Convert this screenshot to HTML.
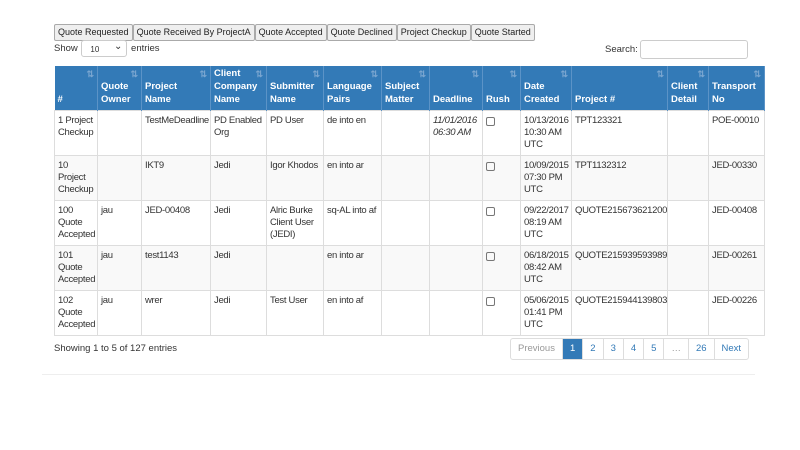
<!DOCTYPE html>
<html><head><style>
body{margin:0;background:#fff;font-family:"Liberation Sans",sans-serif;font-size:9.5px;color:#333;width:800px;height:450px;overflow:hidden;position:relative}
.btns{position:absolute;left:54px;top:24px;display:flex}
.btns span{border:1px solid #aaa;background:#efefef;padding:0 3px;height:15px;line-height:15px;font-size:9px;color:#222;border-radius:2px}
.show{position:absolute;left:54px;top:40px;line-height:16px}
.sel{display:inline-block;width:46px;height:17px;border:1px solid #ccc;border-radius:3px;vertical-align:middle;font-size:8px;line-height:17px;padding-left:8px;box-sizing:border-box;position:relative;margin:0 1px}
.sel:after{content:"⌄";position:absolute;right:4px;top:-3px;font-size:10px}
.search{position:absolute;left:605px;top:40px;line-height:16px}
.search i{display:inline-block;width:106px;height:17px;border:1px solid #ccc;border-radius:3px;vertical-align:middle;margin-left:2px}
table{position:absolute;left:54px;top:66px;border-collapse:collapse;width:710px;table-layout:fixed}
th{background:#337ab7;color:#fff;text-align:left;vertical-align:bottom;font-size:9.5px;padding:0 3px 4px;line-height:13px;height:40px;border-right:1px solid #5b93c7;position:relative}
th:after{content:"⇅";position:absolute;right:3px;top:2px;color:#7aa6d0;font-size:9px}
td{vertical-align:top;padding:4px 3px;line-height:12px;height:36px;border:1px solid #ddd;font-size:9.5px;letter-spacing:-0.3px;overflow:hidden;white-space:normal}
tr:nth-child(odd) td{background:#f9f9f9}
.cb{display:inline-block;width:7px;height:7px;border:1px solid #777;border-radius:2px;margin-top:2px}
.info{position:absolute;left:54px;top:343px}
.pg{position:absolute;left:510px;top:338px;display:flex;border:1px solid #ddd;border-radius:3px;height:20px}
.pg span{line-height:20px;padding:0 7px;border-left:1px solid #ddd;color:#337ab7}
.pg span:first-child{border-left:0;color:#999}
.pg .a{background:#337ab7;color:#fff}
.line{position:absolute;left:42px;top:374px;width:713px;border-top:1px solid #eee}
</style></head><body>
<div class="btns"><span>Quote Requested</span><span>Quote Received By ProjectA</span><span>Quote Accepted</span><span>Quote Declined</span><span>Project Checkup</span><span>Quote Started</span></div>
<div class="show">Show <span class="sel">10</span> entries</div>
<div class="search">Search:<i></i></div>
<table>
<colgroup><col style="width:43px"><col style="width:44px"><col style="width:69px"><col style="width:56px"><col style="width:57px"><col style="width:58px"><col style="width:48px"><col style="width:53px"><col style="width:38px"><col style="width:51px"><col style="width:96px"><col style="width:41px"><col style="width:56px"></colgroup>
<tr><th>#</th><th>Quote<br>Owner</th><th>Project<br>Name</th><th>Client<br>Company<br>Name</th><th>Submitter<br>Name</th><th>Language<br>Pairs</th><th>Subject<br>Matter</th><th>Deadline</th><th>Rush</th><th>Date<br>Created</th><th>Project #</th><th>Client<br>Detail</th><th>Transport<br>No</th></tr>
<tr><td>1 Project Checkup</td><td></td><td>TestMeDeadline</td><td>PD Enabled Org</td><td>PD User</td><td>de into en</td><td></td><td><i>11/01/2016 06:30 AM</i></td><td><span class="cb"></span></td><td>10/13/2016 10:30 AM UTC</td><td>TPT123321</td><td></td><td>POE-00010</td></tr>
<tr><td>10 Project Checkup</td><td></td><td>IKT9</td><td>Jedi</td><td>Igor Khodos</td><td>en into ar</td><td></td><td></td><td><span class="cb"></span></td><td>10/09/2015 07:30 PM UTC</td><td>TPT1132312</td><td></td><td>JED-00330</td></tr>
<tr><td>100 Quote Accepted</td><td>jau</td><td>JED-00408</td><td>Jedi</td><td>Alric Burke Client User (JEDI)</td><td>sq-AL into af</td><td></td><td></td><td><span class="cb"></span></td><td>09/22/2017 08:19 AM UTC</td><td>QUOTE215673621200</td><td></td><td>JED-00408</td></tr>
<tr><td>101 Quote Accepted</td><td>jau</td><td>test1143</td><td>Jedi</td><td></td><td>en into ar</td><td></td><td></td><td><span class="cb"></span></td><td>06/18/2015 08:42 AM UTC</td><td>QUOTE215939593989</td><td></td><td>JED-00261</td></tr>
<tr><td>102 Quote Accepted</td><td>jau</td><td>wrer</td><td>Jedi</td><td>Test User</td><td>en into af</td><td></td><td></td><td><span class="cb"></span></td><td>05/06/2015 01:41 PM UTC</td><td>QUOTE215944139803</td><td></td><td>JED-00226</td></tr>
</table>
<div class="info">Showing 1 to 5 of 127 entries</div>
<div class="pg"><span>Previous</span><span class="a">1</span><span>2</span><span>3</span><span>4</span><span>5</span><span style="color:#999">…</span><span>26</span><span>Next</span></div>
<div class="line"></div>
</body></html>
